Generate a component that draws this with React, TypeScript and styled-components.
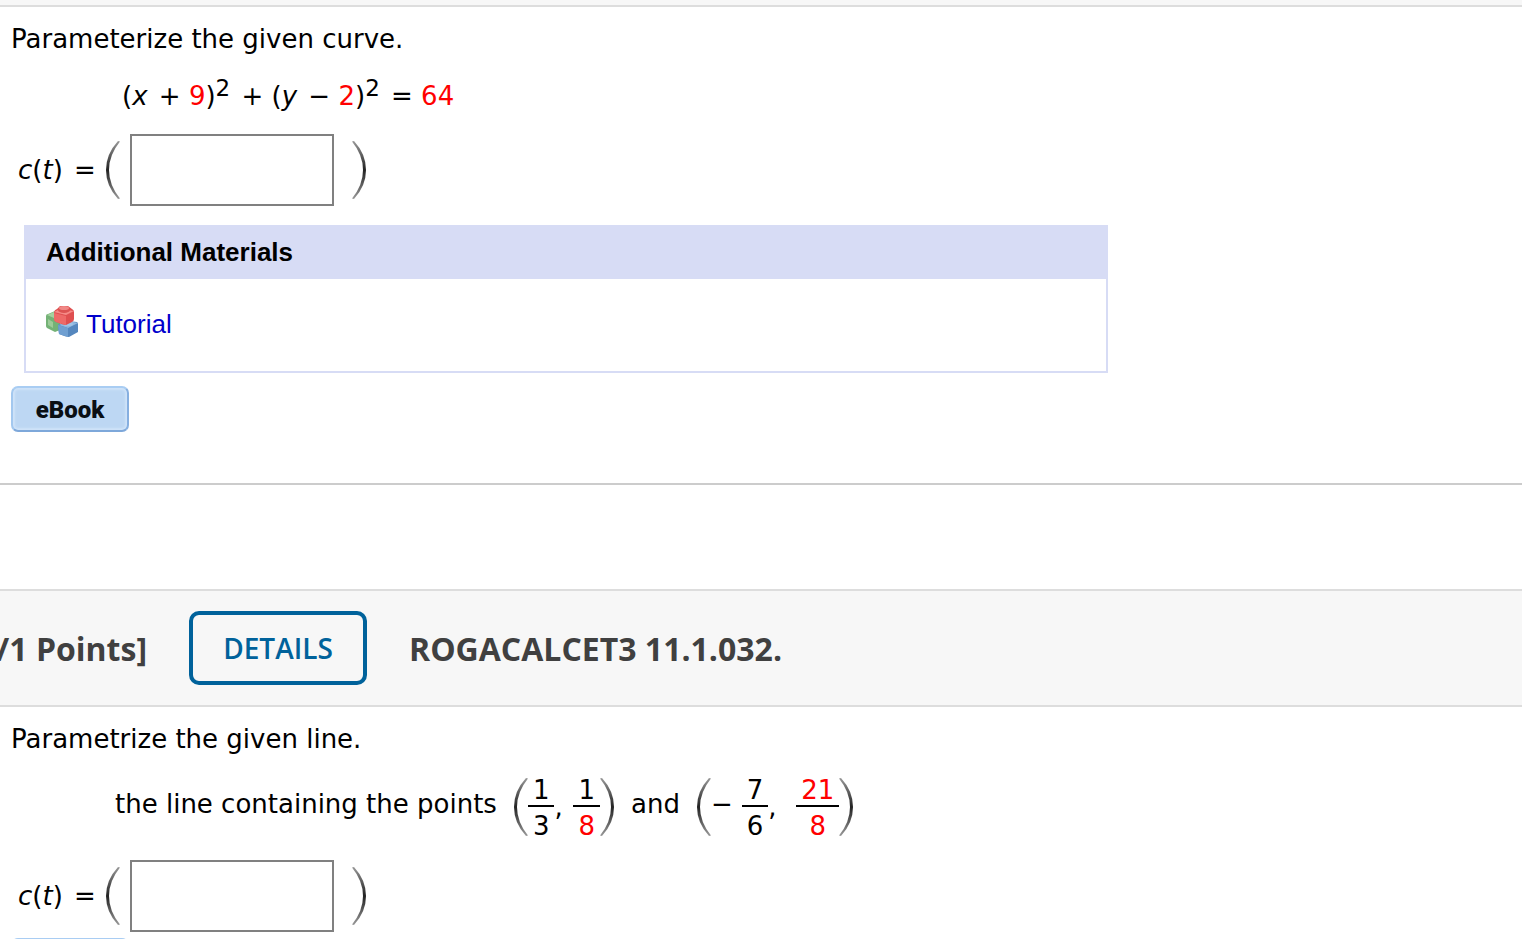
import React from 'react';
import styled, { createGlobalStyle } from 'styled-components';

const GlobalStyle = createGlobalStyle`
  *, *::before, *::after { box-sizing: border-box; }
  body {
    margin: 0;
    background: #fff;
    color: #000;
    font-family: Verdana, "DejaVu Sans", sans-serif;
    font-size: 26px;
    line-height: 32px;
    overflow-x: hidden;
  }
`;

const Page = styled.main`
  height: 100vh;
  overflow: hidden;
`;

const TopEdge = styled.div`
  height: 7px;
  background: #f7f7f7;
  border-bottom: 2px solid #ddd;
`;

const Question = styled.section<{ $divided?: boolean }>`
  padding: 16px 11px 0;
  ${(p) => p.$divided && 'padding-bottom: 51px; border-bottom: 2px solid #ccc;'}
`;

const Prompt = styled.p`
  margin: 0;
`;

const Equation = styled.p`
  margin: 25px 0 0 111px;
  height: 32px;
  white-space: pre;

  sup {
    font-size: 23px;
    line-height: 0;
    vertical-align: 9px;
  }
`;

const Operator = styled.span`
  margin-left: 3px;
`;

const Given = styled.span`
  color: #f00;
`;

const LineStatement = styled.div`
  display: flex;
  align-items: center;
  height: 60px;
  margin: 22px 0 0 104px;
`;

const Words = styled.span`
  padding-bottom: 6px;
`;

const Point = styled.span<{ $after?: boolean }>`
  display: flex;
  align-items: center;
  margin-left: 17px;
  margin-right: ${(p) => (p.$after ? 17 : 0)}px;
`;

const Fraction = styled.span`
  display: flex;
  flex-direction: column;
  text-align: center;
  line-height: 30px;
  padding-top: 2px;

  > span {
    padding: 0 5px;
  }
  > span + span {
    padding-top: 4px;
    border-top: 2px solid #000;
  }
`;

const Comma = styled.span<{ $wide?: boolean }>`
  width: ${(p) => (p.$wide ? 28 : 19)}px;
`;

const Minus = styled.span`
  margin-right: 9px;
  padding-bottom: 6px;
`;

const AnswerRow = styled.div<{ $gap: number }>`
  display: flex;
  align-items: center;
  margin: ${(p) => p.$gap}px 0 0 7px;
`;

const AnswerLabel = styled.label`
  margin-right: 10px;
  white-space: pre;
`;

const AnswerInput = styled.input`
  width: 204px;
  height: 72px;
  margin: 0 18px 0 10px;
  padding: 4px 8px;
  border: 2px solid #808080;
  border-radius: 0;
  background: #fff;
  font: inherit;
  outline: none;
`;

const Materials = styled.section`
  max-width: 1084px;
  margin: 19px 0 0 13px;
  border: 2px solid #d7dcf5;
  font-family: Arial, "Liberation Sans", sans-serif;
`;

const MaterialsTitle = styled.h2`
  margin: 0;
  padding: 9px 20px 11px;
  background: #d7dcf5;
  font-size: 26px;
  line-height: 32px;
`;

const MaterialsBody = styled.div`
  display: flex;
  padding: 27px 20px 29px;
`;

const TutorialLink = styled.a`
  display: flex;
  align-items: flex-start;
  gap: 8px;
  line-height: 36px;
  color: #00c;
  text-decoration: none;
`;

const EbookButton = styled.button<{ $gap: number }>`
  display: block;
  width: 118px;
  height: 46px;
  margin-top: ${(p) => p.$gap}px;
  padding: 2px 0 0;
  border: 2px solid;
  border-color: #a9cdf3 #86afe0 #7ea8da #a3c8ef;
  border-radius: 7px;
  background: #bdd7f3;
  box-shadow: inset 0 0 2px 2px #cfe3f8;
  color: #0a0f14;
  font: 900 24px/32px Roboto, "Liberation Sans", sans-serif;
`;

const QuestionHeader = styled.header`
  display: flex;
  align-items: center;
  height: 118px;
  margin-top: 104px;
  border: solid #ddd;
  border-width: 2px 0;
  background: #f7f7f7;
  color: #404040;
  font: bold 32px/40px "Open Sans", sans-serif;
`;

const Points = styled.span`
  display: flex;
  justify-content: flex-end;
  flex: none;
  width: 147px;
  padding-top: 2px;
  overflow: hidden;
  white-space: nowrap;
`;

const DetailsButton = styled.button`
  width: 178px;
  height: 74px;
  margin: 0 42px;
  padding: 0;
  border: 4px solid #00629b;
  border-radius: 10px;
  background: #f7f7f7;
  color: #00629b;
  font: 600 28px/36px "Open Sans", sans-serif;
`;

const Code = styled.h2`
  margin: 0;
  padding-top: 2px;
  font: inherit;
`;

const ParenSvg = styled.svg`
  display: block;
  flex: none;
`;

function Paren({ side }: { side: 'left' | 'right' }) {
  const outline =
    side === 'left'
      ? 'M12 1 Q0 14 0 30 Q0 46 12 59 L14 58.500 Q3 45 3 30 Q3 15 14 1.500 Z'
      : 'M2 1 Q14 14 14 30 Q14 46 2 59 L0 58.500 Q11 45 11 30 Q11 15 0 1.500 Z';
  const id = `paren-${side}`;
  return (
    <ParenSvg width="14" height="60" viewBox="0 0 14 60" aria-hidden="true">
      <defs>
        <linearGradient id={id} x1="0" y1="0" x2="0" y2="1">
          <stop offset="0" stopColor="#999" />
          <stop offset="0.500" stopColor="#222" />
          <stop offset="1" stopColor="#999" />
        </linearGradient>
      </defs>
      <path d={outline} fill={`url(#${id})`} />
    </ParenSvg>
  );
}

function BlocksIcon() {
  return (
    <svg width="32" height="32" viewBox="0 0 32 32" aria-hidden="true">
      <path d="M0 10 Q0 8 2 8 L9 5 L14 9 V24 L9 26 L1 22 Q0 21 0 20 Z" fill="#74b276" />
      <path d="M1 9 L8 6 L14 9 L8 12 Z" fill="#a5d2a0" />
      <path d="M2 13 L7 16 V22 L2 19 Z" fill="#9ccb98" />
      <path d="M12 20 Q12 18 14 18 L22 15 L31 16 Q32 17 32 18 V26 L23 31 Q20 31 13 28 Z" fill="#5587be" />
      <path d="M13 19 L23 15 L32 17 L22 22 Z" fill="#8fb8df" />
      <path d="M12 19 L22 22 V31 L13 28 Z" fill="#6f9fd1" />
      <ellipse cx="22" cy="18" rx="5" ry="2" fill="#9fc3e6" />
      <path d="M8 7 Q8 4 11 3 L14 0 H22 L26 3 Q28 4 28 6 V13 Q28 15 26 16 L20 19 Q17 19 10 16 Q8 15 8 13 Z" fill="#df4f50" />
      <path d="M8 6 L14 3 L28 5 L20 9 Z" fill="#f58b87" />
      <path d="M8 7 L20 10 V19 L10 16 Q8 15 8 13 Z" fill="#ee6a68" />
      <ellipse cx="18" cy="4" rx="6" ry="3" fill="#dc5352" />
      <ellipse cx="18" cy="2" rx="5" ry="2" fill="#f08886" />
    </svg>
  );
}

function Answer({ id, gap }: { id: string; gap: number }) {
  return (
    <AnswerRow $gap={gap}>
      <AnswerLabel htmlFor={id}>
        <i>c</i>(<i>t</i>) <Operator>=</Operator>
      </AnswerLabel>
      <Paren side="left" />
      <AnswerInput id={id} type="text" />
      <Paren side="right" />
    </AnswerRow>
  );
}

export default function App() {
  return (
    <>
      <GlobalStyle />
      <Page>
        <TopEdge />
        <Question $divided>
          <Prompt>Parameterize the given curve.</Prompt>
          <Equation>
            (<i>x</i> <Operator>+</Operator> <Given>9</Given>)<sup>2</sup> <Operator>+</Operator> (<i>y</i>{' '}
            <Operator>−</Operator> <Given>2</Given>)<sup>2</sup> <Operator>=</Operator> <Given>64</Given>
          </Equation>
          <Answer id="curve" gap={22} />
          <Materials>
            <MaterialsTitle>Additional Materials</MaterialsTitle>
            <MaterialsBody>
              <TutorialLink href="#tutorial">
                <BlocksIcon />
                Tutorial
              </TutorialLink>
            </MaterialsBody>
          </Materials>
          <EbookButton type="button" $gap={13}>eBook</EbookButton>
        </Question>
        <QuestionHeader>
          <Points>/1 Points]</Points>
          <DetailsButton type="button">DETAILS</DetailsButton>
          <Code>ROGACALCET3 11.1.032.</Code>
        </QuestionHeader>
        <Question>
          <Prompt>Parametrize the given line.</Prompt>
          <LineStatement>
            <Words>the line containing the points</Words>
            <Point $after>
              <Paren side="left" />
              <Fraction><span>1</span><span>3</span></Fraction>
              <Comma>,</Comma>
              <Fraction><span>1</span><span><Given>8</Given></span></Fraction>
              <Paren side="right" />
            </Point>
            <Words>and</Words>
            <Point>
              <Paren side="left" />
              <Minus>−</Minus>
              <Fraction><span>7</span><span>6</span></Fraction>
              <Comma $wide>,</Comma>
              <Fraction><span><Given>21</Given></span><span><Given>8</Given></span></Fraction>
              <Paren side="right" />
            </Point>
          </LineStatement>
          <Answer id="line" gap={23} />
          <EbookButton type="button" $gap={6}>eBook</EbookButton>
        </Question>
      </Page>
    </>
  );
}
